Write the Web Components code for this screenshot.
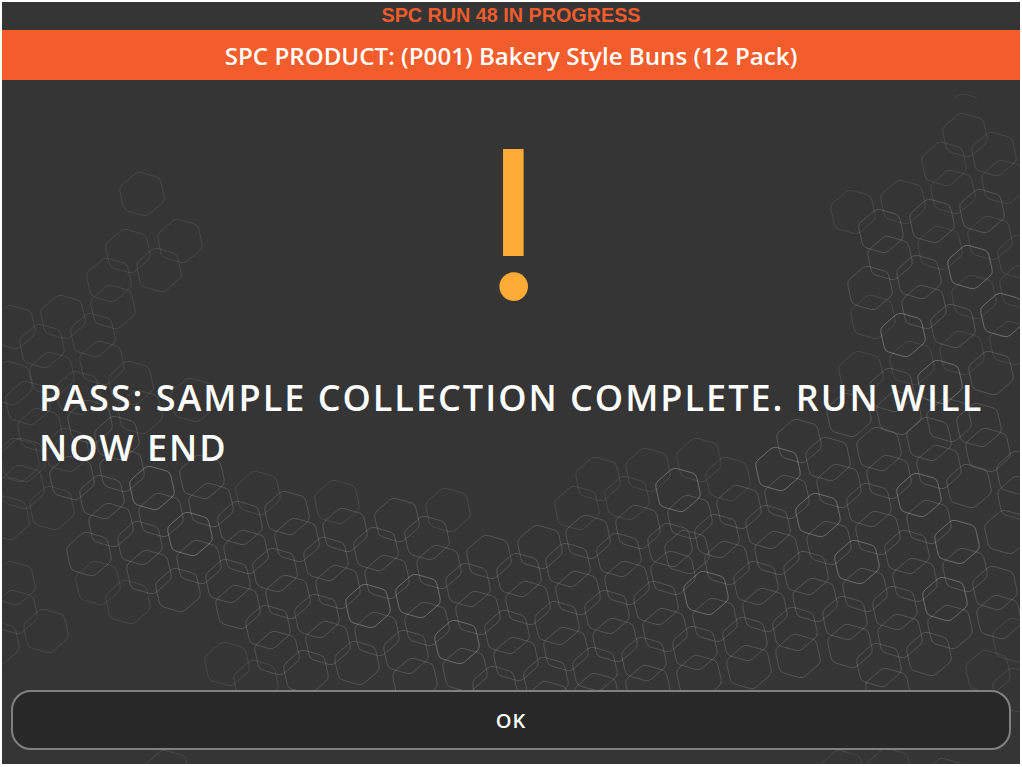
<!DOCTYPE html>
<html>
<head>
<meta charset="utf-8">
<title>SPC run</title>
<style>
  html, body { margin: 0; height: 100%; background: #fff; }
  body { padding: 2px 2px 3px 2px; box-sizing: border-box; }
</style>
</head>
<body>
<spc-screen>
  <run-banner slot="banner">SPC RUN 48 IN PROGRESS</run-banner>
  <product-banner slot="banner">SPC PRODUCT: (P001) Bakery Style Buns (12 Pack)</product-banner>
  <alert-icon></alert-icon>
  <alert-message>PASS: SAMPLE COLLECTION COMPLETE. RUN WILL NOW END</alert-message>
  <ok-button slot="actions">OK</ok-button>
</spc-screen>

<script>
// [x, y, brightness]  brightness: 0 dim, 1 normal, 2 bright
const HEXES = [
  // top right
  [965,135,0],[994,154,0],[944,164,0],[953,192,0],[1004,182,0],[982,211,1],[903,202,0],[853,212,0],
  [881,231,1],[932,221,1],[940,248,0],[990,238,0],[890,258,1],[970,267,2],[919,277,1],[1020,257,0],
  [1022,287,0],[870,288,1],[974,297,0],[924,307,1],[1003,315,2],[873,317,0],[953,326,1],[903,335,2],
  [1012,343,0],[962,353,0],[912,363,0],[991,373,1],[861,373,0],[940,382,2],[892,390,1],
  // left
  [142,194,0],[180,241,0],[128,251,0],[159,270,0],[109,280,0],[113,307,0],[63,317,0],[13,327,0],
  [42,346,0],[93,335,0],[102,363,0],[52,374,0],[131,383,0],[78,393,0],[10,383,0],[28,403,0],
  [140,412,0],[193,400,0],[90,422,1],[40,430,0],[117,438,1],[67,450,0],[17,460,0],
  // bottom left
  [72,478,1],[122,470,1],[152,488,2],[102,497,1],[52,508,0],[202,477,1],[161,515,1],[111,525,1],
  [211,505,1],[190,534,2],[140,543,1],[89,554,1],[240,523,1],[258,493,0],[287,513,1],[297,540,1],
  [246,552,1],[199,562,1],[149,572,1],[98,583,0],[337,502,0],[345,530,1],[326,559,1],[275,570,1],
  [228,581,1],[178,590,1],[128,602,0],[288,597,1],[238,607,1],[338,587,1],[317,616,1],[268,627,1],
  [328,643,1],[277,653,1],[227,664,0],[306,672,1],[256,682,0],[13,583,0],[15,612,0],[46,631,0],
  [-3,643,0],[23,460,0],[22,487,0],[7,518,0],
  // bottom middle
  [448,510,0],[397,520,1],[427,538,1],[376,549,1],[439,567,1],[387,577,1],
  [489,557,1],[468,585,1],[519,575,1],[540,547,1],[418,596,2],[368,606,2],[478,613,1],
  [528,603,1],[427,624,1],[377,634,1],[457,642,2],[507,632,1],[557,623,1],[568,565,1],[578,593,1],
  [577,508,0],[598,479,0],[648,470,0],[627,498,0],[638,527,1],[588,537,1],[619,555,1],[670,545,1],
  [678,490,2],[690,517,1],[627,583,1],[607,612,1],[656,603,1],[673,573,1],[665,630,1],[615,640,1],
  [566,649,1],[516,659,1],[465,670,1],[406,652,1],[357,663,1],[415,680,1],[644,659,1],[595,669,1],
  [546,679,1],[495,688,1],[648,687,1],[597,695,1],[548,703,1],
  // bottom right
  [799,441,1],[849,415,1],[899,413,1],[949,420,1],[979,425,1],[929,439,1],[879,449,1],[828,459,1],
  [778,469,2],[699,460,0],[728,479,0],[988,450,1],[939,467,1],[889,477,1],[839,486,1],[787,497,1],
  [739,507,1],[1019,473,1],[969,486,1],[919,495,2],[869,505,1],[818,515,2],
  [768,527,1],[717,536,1],[1020,498,1],[1007,532,1],[957,542,2],[929,522,1],[878,533,1],[829,543,1],
  [777,553,1],[727,563,1],[687,552,1],[907,552,1],[857,562,2],[806,573,1],[756,583,1],[706,593,2],
  [965,570,1],[915,580,1],[865,590,1],[815,600,1],[765,610,1],[715,620,1],[995,588,1],[945,599,2],
  [895,608,1],[845,618,1],[795,629,1],[745,639,1],[695,648,1],[999,617,1],[950,627,1],[900,636,1],
  [850,646,1],[798,656,1],[749,667,1],[699,677,1],[929,654,1],[879,665,1],[988,672,0],[888,690,1],
  [1015,640,0],[1015,690,0],
  // below the button
  [167,772,0],[842,772,0],[889,770,0],[945,780,0]
];

const CORNERS = [[-4.5,-22.5],[18,-16],[23,6.5],[4.5,22.5],[-18,16],[-23,-6.5]];

// hexagon outline with rounded corners
function hexPath(radius) {
  let d = '';
  CORNERS.forEach((c, i) => {
    const prev = CORNERS[(i + 5) % 6];
    const next = CORNERS[(i + 1) % 6];
    const lenA = Math.hypot(prev[0] - c[0], prev[1] - c[1]);
    const lenB = Math.hypot(next[0] - c[0], next[1] - c[1]);
    const ax = c[0] + (prev[0] - c[0]) * radius / lenA;
    const ay = c[1] + (prev[1] - c[1]) * radius / lenA;
    const bx = c[0] + (next[0] - c[0]) * radius / lenB;
    const by = c[1] + (next[1] - c[1]) * radius / lenB;
    d += (i ? 'L' : 'M') + ax.toFixed(2) + ' ' + ay.toFixed(2);
    d += 'Q' + c[0] + ' ' + c[1] + ' ' + bx.toFixed(2) + ' ' + by.toFixed(2);
  });
  return d + 'Z';
}

class HexBackdrop extends HTMLElement {
  connectedCallback() {
    this.attachShadow({ mode: 'open' });
    const d = hexPath(4);
    const alpha = [0.09, 0.15, 0.27];
    // coordinates above are page coordinates, the frame starts at 2,2
    const shapes = HEXES.map(([x, y, b]) =>
      `<path d="${d}" transform="translate(${x - 2} ${y - 2})" stroke-opacity="${alpha[b]}"/>`).join('');
    this.shadowRoot.innerHTML = `
      <style>
        :host { display: block; overflow: hidden; }
        svg { display: block; width: 1018px; height: 762px; }
        path { fill: none; stroke: #fff; stroke-width: 1; }
      </style>
      <svg viewBox="0 0 1018 762" aria-hidden="true">
        ${shapes}
        <path d="M954 98Q960 93 965 94L977 98" transform="translate(-2 -2)" stroke-opacity="0.07"/>
      </svg>`;
  }
}

class SpcScreen extends HTMLElement {
  connectedCallback() {
    this.attachShadow({ mode: 'open' });
    this.shadowRoot.innerHTML = `
      <style>
        :host {
          display: grid;
          width: 1018px;
          height: 762px;
          background: #353535;
          overflow: hidden;
        }
        hex-backdrop, .content { grid-area: 1 / 1; }
        hex-backdrop { height: 762px; }
        .content {
          display: flex;
          flex-direction: column;
          min-height: 0;
        }
        .body {
          flex: 1;
          display: flex;
          flex-direction: column;
        }
        .actions {
          padding: 0 9px 14px 9px;
        }
      </style>
      <hex-backdrop></hex-backdrop>
      <div class="content">
        <slot name="banner"></slot>
        <div class="body"><slot></slot></div>
        <div class="actions"><slot name="actions"></slot></div>
      </div>`;
  }
}

class RunBanner extends HTMLElement {
  connectedCallback() {
    this.attachShadow({ mode: 'open' });
    this.shadowRoot.innerHTML = `
      <style>
        :host {
          display: block;
          height: 28px;
          text-align: center;
          font: bold 19.75px/26px "Liberation Sans", Arial, sans-serif;
          color: #f35c2b;
        }
      </style>
      <slot></slot>`;
  }
}

class ProductBanner extends HTMLElement {
  connectedCallback() {
    this.attachShadow({ mode: 'open' });
    this.shadowRoot.innerHTML = `
      <style>
        :host {
          display: block;
          height: 50px;
          background: #f35c2b;
          color: #fff;
          text-align: center;
          font: 600 24.15px/52px "Open Sans", sans-serif;
        }
      </style>
      <slot></slot>`;
  }
}

class AlertIcon extends HTMLElement {
  connectedCallback() {
    this.attachShadow({ mode: 'open' });
    this.shadowRoot.innerHTML = `
      <style>
        :host {
          display: flex;
          justify-content: center;
          padding: 69px 0 0 5px;
        }
        svg { display: block; }
      </style>
      <svg width="30" height="153" viewBox="0 0 30 153" aria-hidden="true">
        <rect x="4" y="0" width="20.6" height="107" fill="#ffab36"/>
        <circle cx="14.7" cy="137.6" r="14.3" fill="#ffab36"/>
      </svg>`;
  }
}

class AlertMessage extends HTMLElement {
  connectedCallback() {
    this.attachShadow({ mode: 'open' });
    this.shadowRoot.innerHTML = `
      <style>
        :host {
          display: block;
          padding: 71px 30px 0 37px;
          color: #fff;
          font: 600 36px/50px "Open Sans", sans-serif;
          letter-spacing: 2px;
        }
      </style>
      <slot></slot>`;
  }
}

class OkButton extends HTMLElement {
  connectedCallback() {
    this.attachShadow({ mode: 'open' });
    this.shadowRoot.innerHTML = `
      <style>
        :host {
          display: flex;
          align-items: center;
          justify-content: center;
          box-sizing: border-box;
          height: 60px;
          background: #282828;
          border: 2px solid #808080;
          border-radius: 20px;
          color: #fff;
          font: 600 20px "Open Sans", sans-serif;
          letter-spacing: 1px;
        }
      </style>
      <slot></slot>`;
  }
}

customElements.define('hex-backdrop', HexBackdrop);
customElements.define('spc-screen', SpcScreen);
customElements.define('run-banner', RunBanner);
customElements.define('product-banner', ProductBanner);
customElements.define('alert-icon', AlertIcon);
customElements.define('alert-message', AlertMessage);
customElements.define('ok-button', OkButton);
</script>
</body>
</html>
